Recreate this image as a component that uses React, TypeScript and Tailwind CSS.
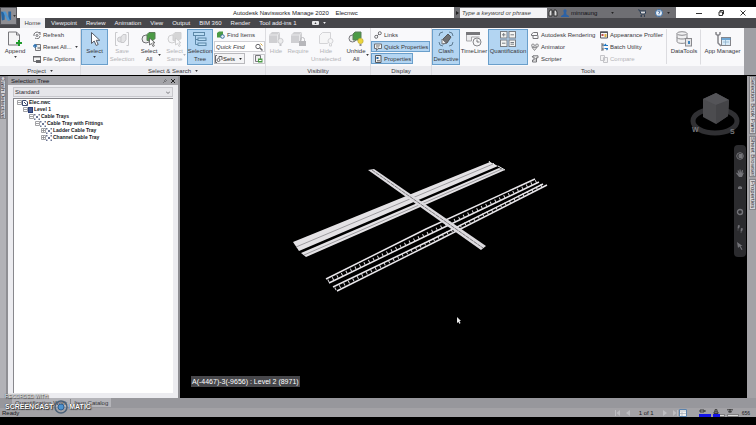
import clsx from 'clsx';
import { ReactNode } from 'react';

interface IconProps {
  className?: string;
}

const menuTabs = ['Viewpoint', 'Review', 'Animation', 'View', 'Output', 'BIM 360', 'Render', 'Tool add-ins 1'];

const treeRows = [
  { label: 'Elec.nwc', indent: 'pl-[3px]', open: true, kind: 'file' },
  { label: 'Level 1', indent: 'pl-[9px]', open: true, kind: 'level' },
  { label: 'Cable Trays', indent: 'pl-[15px]', open: true, kind: 'set' },
  { label: 'Cable Tray with Fittings', indent: 'pl-[21px]', open: true, kind: 'set' },
  { label: 'Ladder Cable Tray', indent: 'pl-[27px]', open: false, kind: 'set' },
  { label: 'Channel Cable Tray', indent: 'pl-[27px]', open: false, kind: 'set' },
];

function AppendIcon() {
  return (
    <svg viewBox="0 0 16 16" className="size-4" fill="none">
      <path d="M1.500 1h8l3 3v10h-11z" fill="#f4f4f5" stroke="#77777b" />
      <path d="M9.500 1v3h3" stroke="#77777b" />
      <path d="M12 9v6M9 12h6" stroke="#1f9a2c" strokeWidth="2" />
    </svg>
  );
}

function CursorIcon() {
  return (
    <svg viewBox="0 0 16 16" className="size-4">
      <path d="M4.500 1.500v11l2.700-2.500 2 4.500 2-1-2-4.200h3.600z" fill="#fff" stroke="#555a66" strokeWidth="1" />
    </svg>
  );
}

function SaveSelectionIcon() {
  return (
    <svg viewBox="0 0 16 16" className="size-4" fill="none" stroke="#c9c9cc">
      <path d="M3.500 1.500h-2v13h2M12.500 1.500h2v13h-2" />
      <circle cx="6" cy="8.500" r="2.500" fill="#e2e2e4" />
      <path d="M7 6l2-2.500h3v5l-2 3H7z" fill="#e4e4e6" />
    </svg>
  );
}

function SelectAllIcon({ className }: IconProps) {
  return (
    <svg viewBox="0 0 16 16" className={clsx('size-4', className)}>
      <circle cx="5" cy="8" r="4" fill="#eee" stroke="#707074" />
      <path d="M6 3.500l2-2h6v6l-2 2H6z" fill="#4b9b45" stroke="#5b7f58" />
      <path d="M8.500 7v7l2-1.500 1.500 3 1.300-.7-1.500-3H14z" fill="#fff" stroke="#555" strokeWidth=".8" />
    </svg>
  );
}

function UnhideIcon() {
  return (
    <svg viewBox="0 0 16 16" className="size-4">
      <circle cx="4.500" cy="7.500" r="3.500" fill="#eee" stroke="#77777b" />
      <path d="M5 3l2-2h6v6l-2 2H5z" fill="#4b9b45" stroke="#5b7f58" />
      <circle cx="12.500" cy="10" r="2.700" fill="#ecd63c" stroke="#b7a53a" strokeWidth=".6" />
      <path d="M11.500 13h2v2h-2z" fill="#8a8a8d" />
    </svg>
  );
}

function SelectionTreeIcon() {
  return (
    <svg viewBox="0 0 16 16" className="size-4" fill="#b9dcf4" stroke="#5d88a8">
      <rect x="1.500" y="1.500" width="11" height="3" />
      <path d="M3.500 4.500v9H6M3.500 8.500H6" fill="none" />
      <rect x="6" y="7" width="8" height="2.500" />
      <rect x="6" y="12" width="8" height="2.500" />
    </svg>
  );
}

function HideIcon({ badge }: { badge: 'bulb' | 'lock' }) {
  return (
    <svg viewBox="0 0 16 16" className="size-4">
      <path d="M1 4l3-3h8v8l-2.500 3H1z" fill="#cfcfd2" />
      <path d="M1 4h8.500v8M9.500 4L12 1" fill="none" stroke="#e8e8ea" />
      {badge === 'bulb' ? (
        <>
          <circle cx="12.500" cy="10" r="2.600" fill="#ededee" stroke="#c4c4c8" strokeWidth=".8" />
          <path d="M11.500 13h2v2h-2z" fill="#c4c4c8" />
        </>
      ) : (
        <>
          <path d="M10.500 10V8.500a2 2 0 014 0V10" fill="none" stroke="#bdbdc1" />
          <rect x="9" y="10" width="7" height="5" fill="#b7b7bb" />
        </>
      )}
    </svg>
  );
}

function HideUnselectedIcon() {
  return (
    <svg viewBox="0 0 16 16" className="size-4" fill="#f6f6f7" stroke="#d4d4d7">
      <path d="M1.500 4.500l3-3h8v7l-3 4h-8z" />
      <circle cx="12.500" cy="10" r="2.500" />
      <path d="M11.500 13v2h2v-2" />
    </svg>
  );
}

function ClashIcon() {
  return (
    <svg viewBox="0 0 16 16" className="size-4" fill="none" stroke="#5f7c93">
      <path d="M1 5l1-3 3-1M11 1l3 1 1 3M1 11l1 3 3 1M15 11l-1 3-3 1" />
      <path d="M5 8l5-5 3 3-4 6-4 1z" fill="#6f7073" stroke="#55575b" />
      <path d="M4 8l4 4-4 1z" fill="#f2f2f2" stroke="#77797d" />
    </svg>
  );
}

function TimeLinerIcon() {
  return (
    <svg viewBox="0 0 16 16" className="size-4">
      <rect x="0" y="1" width="14" height="3" fill="#77777b" />
      <path d="M.5 4v6h5V6h8" fill="#ececee" stroke="#a7a7aa" />
      <circle cx="11" cy="11" r="4" fill="#f7f7f8" stroke="#86868a" />
      <path d="M11 8.500V11h2.500" fill="none" stroke="#77777b" />
    </svg>
  );
}

function QuantificationIcon() {
  return (
    <svg viewBox="0 0 16 16" className="size-4" fill="#f4f4f2" stroke="#787d83">
      <rect x=".5" y=".5" width="6.500" height="6.500" />
      <rect x="9" y=".5" width="6.500" height="6.500" />
      <rect x=".5" y="9" width="6.500" height="6.500" />
      <rect x="9" y="9" width="6.500" height="6.500" />
      <path d="M2 3.800h3.500M3.700 2v3.500M10.500 3.800H14M2 12.200h3.500M10.500 11.500H14M10.500 13.200H14" />
    </svg>
  );
}

function DataToolsIcon() {
  return (
    <svg viewBox="0 0 16 16" className="size-4" fill="#f1f1f2" stroke="#8a8a8e">
      <path d="M1 2.500v8c0 2.500 10 2.500 10 0v-8" />
      <ellipse cx="6" cy="2.500" rx="5" ry="1.800" />
      <path d="M1 6.500c0 2 10 2 10 0" fill="none" />
      <rect x="9.500" y="7.500" width="6" height="7.500" fill="#e4e4e6" />
      <path d="M12 10h2v3h-2z" fill="#3f86c0" stroke="none" />
    </svg>
  );
}

function AppManagerIcon() {
  return (
    <svg viewBox="0 0 16 16" className="size-4" fill="none" stroke="#85858a">
      <path d="M1 1v2l2 1.500L5 3V1M3 4.500V12l3 3" strokeWidth="1.500" />
      <rect x="6.500" y="6.500" width="9" height="8" fill="#d9ebf8" />
      <path d="M6.500 8h9" stroke="#4c91c9" strokeWidth="1.500" />
      <path d="M8 11h6M10.500 9v5" stroke="#8fb2cd" strokeWidth=".8" />
    </svg>
  );
}

type SmallKind =
  | 'refresh' | 'reset' | 'file' | 'find' | 'links' | 'quick' | 'props' | 'render'
  | 'animator' | 'scripter' | 'appearance' | 'batch' | 'compare' | 'sets' | 'search' | 'export';

const smallPaths: Record<SmallKind, ReactNode> = {
  refresh: (
    <g fill="none" stroke="#707074">
      <path d="M1 5a3 3 0 015-3l1-1v3M7 5a3 3 0 01-5 2" />
      <circle cx="4" cy="4.500" r="1" />
    </g>
  ),
  reset: (
    <g fill="none">
      <path d="M2.500 1.500h5v6h-5z" fill="#eee" stroke="#77777b" />
      <path d="M0 3.500l2-2 2 2M2 2v3" stroke="#2e74b5" strokeWidth="1.200" />
      <path d="M4.500 5h3" stroke="#555" />
    </g>
  ),
  file: (
    <g>
      <path d="M.5 1.500h7v5h-7z" fill="#f3f3f3" stroke="#77777b" />
      <path d="M0 1h8v1.500H0zM3 5h5v3H3z" fill="#66666a" />
    </g>
  ),
  find: (
    <g>
      <path d="M0 2l2-1.500h4V5L4 6.500H0z" fill="#4b9b45" />
      <circle cx="5.500" cy="5.500" r="1.800" fill="#e7f0f8" stroke="#3c6f9e" />
    </g>
  ),
  links: (
    <g fill="none" stroke="#707074">
      <circle cx="5.800" cy="2.200" r="1.500" />
      <circle cx="2.200" cy="5.800" r="1.500" />
      <path d="M3 5l2-2" />
    </g>
  ),
  quick: (
    <g>
      <path d="M.5 1h7v4.500H4l-1.500 2v-2h-2z" fill="#f4f4f2" stroke="#6c6f74" />
      <path d="M2 2.800h4M2 4h3" stroke="#6c6f74" strokeWidth=".7" />
    </g>
  ),
  props: (
    <g>
      <path d="M1.500.5h5.500v7H1.500z" fill="#f4f4f2" stroke="#55585e" />
      <path d="M2.500 2h2v2h-2z" fill="#2465a3" />
      <path d="M3 5.800h3" stroke="#555" />
    </g>
  ),
  render: (
    <g fill="none" stroke="#77777b">
      <path d="M.5 3l2-1.500h4v3H.5zM2 4.500v3h5v-3" />
    </g>
  ),
  animator: (
    <g fill="#ddd" stroke="#808084" strokeWidth=".8">
      <circle cx="2" cy="2.500" r="1.500" />
      <circle cx="6" cy="2.500" r="1.500" />
      <path d="M1 4.500h5l-2.500 3z" />
    </g>
  ),
  scripter: (
    <g fill="#eee" stroke="#77777b">
      <path d="M2 .8h5v2H5.500V7h-4V5H3V2H1z" />
      <path d="M3.500 3.500h2M3.500 5h2" strokeWidth=".6" />
    </g>
  ),
  appearance: (
    <g>
      <path d="M.5 1h7v6h-7z" fill="#f6f6f6" stroke="#55555a" />
      <path d="M0 .5h8V2H0z" fill="#55555a" />
      <path d="M1.500 3h2v2h-2z" fill="#c0504d" />
      <path d="M4.500 3h2v3h-2z" fill="#e0b040" />
    </g>
  ),
  batch: (
    <g fill="none" strokeWidth="1.200">
      <path d="M1 1h2v2H1M1 5h2v2H1" stroke="#66666a" />
      <path d="M8 2.500H4.500L6 1M4.500 5.500H8L6.500 7" stroke="#1f77c4" />
    </g>
  ),
  compare: (
    <g fill="#f3f3f4" stroke="#c4c4c8">
      <path d="M.5.5h4v5h-4zM3.500 2.500h4v5h-4z" />
    </g>
  ),
  sets: (
    <g fill="none" stroke="#66666a">
      <path d="M2 .5H.5v7H2" />
      <circle cx="3.500" cy="5" r="1.500" />
      <path d="M4 3V1.500h3V5" />
    </g>
  ),
  search: (
    <g fill="none" stroke="#66666a">
      <circle cx="3" cy="3.500" r="2.200" />
      <path d="M5 5l2.500 2.500" strokeWidth="1.500" />
      <path d="M5.500.5l2 2" stroke="#d8a83c" />
    </g>
  ),
  export: (
    <g>
      <path d="M.5.5h5v6h-5z" fill="#eee" stroke="#77777b" />
      <path d="M3 3.500h4.500v4H3z" fill="#4b9b45" />
      <path d="M4 5.500h2.500" stroke="#fff" />
    </g>
  ),
};

function SmallIcon({ kind }: { kind: SmallKind }) {
  return (
    <svg viewBox="0 0 8 8" className="size-2 shrink-0">
      {smallPaths[kind]}
    </svg>
  );
}

function Caret({ className }: IconProps) {
  return (
    <svg viewBox="0 0 4 3" className={clsx('h-[2px] w-[3px] shrink-0', className)}>
      <path d="M0 0h4L2 3z" fill="currentColor" />
    </svg>
  );
}

interface BigButtonProps {
  icon: ReactNode;
  lines: string[];
  className?: string;
  active?: boolean;
  disabled?: boolean;
  caret?: 'below' | 'side';
}

function BigButton({ icon, lines, className, active, disabled, caret }: BigButtonProps) {
  return (
    <button
      type="button"
      disabled={disabled}
      className={clsx(
        'relative flex h-[36px] shrink-0 flex-col items-center border pt-px leading-[8px]',
        active ? 'border-[#6a9fcb] bg-[#b3d5f2]' : 'border-transparent',
        disabled ? 'text-[#b4b4b8]' : 'text-[#38383c]',
        className
      )}
    >
      {icon}
      {lines.map((line) => (
        <span key={line} className="whitespace-nowrap">
          {line}
        </span>
      ))}
      {caret === 'below' && <Caret className="mt-px" />}
      {caret === 'side' && <Caret className="absolute right-0 bottom-[8px]" />}
    </button>
  );
}

interface SmallButtonProps {
  kind: SmallKind;
  label: string;
  active?: boolean;
  disabled?: boolean;
  caret?: boolean;
}

function SmallButton({ kind, label, active, disabled, caret }: SmallButtonProps) {
  return (
    <button
      type="button"
      disabled={disabled}
      className={clsx(
        'flex h-[11px] items-center gap-[2px] border pr-px pl-[2px] whitespace-nowrap',
        active ? 'border-[#6a9fcb] bg-[#b3d5f2]' : 'border-transparent',
        disabled ? 'text-[#b4b4b8]' : 'text-[#38383c]'
      )}
    >
      <SmallIcon kind={kind} />
      {label}
      {caret && <Caret className="ml-px" />}
    </button>
  );
}

interface GroupProps {
  title: string;
  className?: string;
  caret?: boolean;
  children: ReactNode;
}

function Group({ title, className, caret, children }: GroupProps) {
  return (
    <section className={clsx('flex flex-col border-r border-[#dcdce0]', className)}>
      <div className="flex h-[38px] items-start pt-px">{children}</div>
      <h2 className="flex h-[9px] items-center justify-center gap-1 bg-[#ebebef] text-[#38383c]">
        {title}
        {caret && <Caret />}
      </h2>
    </section>
  );
}

function TitleBar() {
  return (
    <header className="flex h-[11px] shrink-0 items-center bg-white text-[#202024]">
      <h1 className="flex-1 pl-[233px] whitespace-pre">
        Autodesk Navisworks Manage 2020{'    '}Elecnwc
      </h1>
      <div className="flex h-full w-[222px] items-center bg-[#6f6f73]">
        <span className="flex w-[6px] justify-center text-[#222]">
          <svg viewBox="0 0 3 4" className="h-1 w-[3px]">
            <path d="M0 0l3 2-3 2z" fill="currentColor" />
          </svg>
        </span>
        <input
          aria-label="Search"
          placeholder="Type a keyword or phrase"
          className="h-[10px] w-[87px] bg-[#f4f4f6] px-[2px] italic outline-none placeholder:text-[#3c3c40]"
        />
        <button type="button" aria-label="Find" className="ml-px">
          <svg viewBox="0 0 10 8" className="h-2 w-[10px]" fill="#ddd" stroke="#333">
            <path d="M1 3l1-2h2v6H1zM9 3L8 1H6v6h3zM4 3h2" />
          </svg>
        </button>
        <button type="button" className="ml-[3px] flex items-center gap-[2px] text-[#111114]">
          <svg viewBox="0 0 8 8" className="size-2" fill="#2d62a5">
            <circle cx="4" cy="2" r="1.700" />
            <path d="M3 3h2l.5 2.500L8 7v1H0V7l2.500-1.500z" />
          </svg>
          minnaung
        </button>
        <Caret className="ml-[14px] text-[#222]" />
        <button type="button" aria-label="App store" className="ml-[24px]">
          <svg viewBox="0 0 8 8" className="size-2" fill="none" stroke="#24364c">
            <path d="M0 1h1.500L3 5h4l1-3H2" fill="#d8d8da" />
            <path d="M2.500 7h1.500M6 7h1" strokeWidth="1.500" />
          </svg>
        </button>
        <button type="button" aria-label="Help" className="ml-[9px] flex items-center gap-1">
          <svg viewBox="0 0 8 8" className="size-2" fill="none">
            <circle cx="4" cy="4" r="3.500" fill="#eaf1f8" stroke="#3a6ea5" />
            <path d="M3 3c0-1.500 2.300-1.300 2 0L4 4.300V5M4 5.700v.8" stroke="#24508a" strokeWidth=".9" />
          </svg>
          <Caret />
        </button>
      </div>
      <div className="flex w-[80px] items-center justify-between pr-[10px] pl-[20px]">
        <button type="button" aria-label="Minimize">
          <svg viewBox="0 0 6 6" className="size-[6px]" stroke="#333">
            <path d="M0 3.500h6" />
          </svg>
        </button>
        <button type="button" aria-label="Restore">
          <svg viewBox="0 0 6 6" className="size-[6px]" fill="none" stroke="#333">
            <path d="M1 2h3.500v3.500H1zM2 2V.5h3.500V4h-1" />
          </svg>
        </button>
        <button type="button" aria-label="Close">
          <svg viewBox="0 0 6 6" className="size-[6px]" stroke="#333">
            <path d="M.5.5l5 5M5.500.5l-5 5" />
          </svg>
        </button>
      </div>
    </header>
  );
}

function MenuBar() {
  return (
    <nav className="flex h-[10px] shrink-0 items-center bg-[#47474b] pl-5 text-[#f0f0f3]">
      <button type="button" className="h-full w-[25px] bg-[#f1f1f4] text-[#3c3c40]">
        Home
      </button>
      <div className="flex items-center gap-[9px] pl-[6px]">
        {menuTabs.map((tab) => (
          <button key={tab} type="button" className="whitespace-nowrap">
            {tab}
          </button>
        ))}
      </div>
      <button type="button" aria-label="Ribbon display" className="ml-[15px] flex items-center gap-1">
        <svg viewBox="0 0 7 4" className="h-1 w-[7px]">
          <rect width="7" height="4" rx="1" fill="#e8e8ea" />
          <path d="M2.500 3h2L3.500 1z" fill="#47474b" />
        </svg>
        <Caret />
      </button>
    </nav>
  );
}

function Ribbon() {
  return (
    <div className="flex h-[47px] shrink-0 bg-[#9f9fa4] pr-[12px]">
      <div className="flex flex-1 bg-[#f9f9fb]">
        <Group title="Project" caret className="w-[81px]">
          <BigButton icon={<AppendIcon />} lines={['Append']} caret="below" className="w-[30px]" />
          <div className="flex flex-col gap-px">
            <SmallButton kind="refresh" label="Refresh" />
            <SmallButton kind="reset" label="Reset All..." caret />
            <SmallButton kind="file" label="File Options" />
          </div>
        </Group>
        <Group title="Select & Search" caret className="w-[185px]">
          <BigButton icon={<CursorIcon />} lines={['Select']} caret="below" active className="w-[27px]" />
          <BigButton icon={<SaveSelectionIcon />} lines={['Save', 'Selection']} disabled className="w-[28px]" />
          <BigButton icon={<SelectAllIcon />} lines={['Select', 'All']} caret="side" className="w-[26px]" />
          <BigButton
            icon={<SelectAllIcon className="opacity-30 grayscale" />}
            lines={['Select', 'Same']}
            caret="side"
            disabled
            className="w-[25px]"
          />
          <BigButton icon={<SelectionTreeIcon />} lines={['Selection', 'Tree']} active className="w-[26px]" />
          <div className="flex flex-1 flex-col gap-px pl-px">
            <SmallButton kind="find" label="Find Items" />
            <div className="flex h-[11px] items-center border border-[#d0d0d4] bg-white pr-px">
              <input
                aria-label="Quick Find"
                placeholder="Quick Find"
                className="w-0 flex-1 pl-px italic outline-none placeholder:text-[#38383c]"
              />
              <SmallIcon kind="search" />
            </div>
            <div className="flex items-center justify-between">
              <div className="relative flex h-[11px] w-[31px] items-center border border-[#b9b9bd] bg-[#f4f4f6]">
                <SmallIcon kind="sets" />
                <select aria-label="Sets" className="flex-1 appearance-none text-[#222] outline-none">
                  <option>Sets</option>
                </select>
                <Caret className="absolute right-[2px] text-[#222]" />
              </div>
              <button type="button" aria-label="Manage sets" className="border border-[#c8c8cc] px-px">
                <SmallIcon kind="export" />
              </button>
            </div>
          </div>
        </Group>
        <Group title="Visibility" className="w-[105px]">
          <BigButton icon={<HideIcon badge="bulb" />} lines={['Hide']} disabled className="w-[20px]" />
          <BigButton icon={<HideIcon badge="lock" />} lines={['Require']} disabled className="w-[24px]" />
          <BigButton icon={<HideUnselectedIcon />} lines={['Hide', 'Unselected']} disabled className="w-[32px]" />
          <BigButton icon={<UnhideIcon />} lines={['Unhide', 'All']} caret="side" className="w-[28px]" />
        </Group>
        <Group title="Display" className="w-[61px]">
          <div className="flex flex-col items-start gap-px">
            <SmallButton kind="links" label="Links" />
            <SmallButton kind="quick" label="Quick Properties" active />
            <SmallButton kind="props" label="Properties" active />
          </div>
        </Group>
        <Group title="Tools" className="flex-1 border-r-0">
          <BigButton icon={<ClashIcon />} lines={['Clash', 'Detective']} active className="w-[28px]" />
          <BigButton icon={<TimeLinerIcon />} lines={['TimeLiner']} className="w-[28px]" />
          <BigButton icon={<QuantificationIcon />} lines={['Quantification']} active className="w-[40px]" />
          <div className="flex w-[69px] flex-col items-start gap-px">
            <SmallButton kind="render" label="Autodesk Rendering" />
            <SmallButton kind="animator" label="Animator" />
            <SmallButton kind="scripter" label="Scripter" />
          </div>
          <div className="flex w-[70px] flex-col items-start gap-px border-r border-[#dcdce0]">
            <SmallButton kind="appearance" label="Appearance Profiler" />
            <SmallButton kind="batch" label="Batch Utility" />
            <SmallButton kind="compare" label="Compare" disabled />
          </div>
          <BigButton icon={<DataToolsIcon />} lines={['DataTools']} className="w-[34px] border-r-[#dcdce0]" />
          <BigButton icon={<AppManagerIcon />} lines={['App Manager']} className="flex-1" />
        </Group>
      </div>
    </div>
  );
}

function NodeIcon({ kind }: { kind: string }) {
  if (kind === 'level') {
    return (
      <svg viewBox="0 0 5 6" className="h-[6px] w-[5px]">
        <path d="M0 0h5v6H0z" fill="#2a3f78" />
        <path d="M1 2h3M1 4h3" stroke="#8ea3d4" strokeWidth=".6" />
      </svg>
    );
  }
  if (kind === 'file') {
    return (
      <svg viewBox="0 0 6 6" className="size-[6px]" fill="none" stroke="#3c4a6e">
        <path d="M.5.5h3.500L5.500 2v3.500h-5zM2 2l2.500 2.500" />
      </svg>
    );
  }
  return (
    <svg viewBox="0 0 6 6" className="size-[6px]" fill="#6d7796">
      <path d="M0 0h1.500v1.500H0zM4.500 0H6v1.500H4.500zM2 2h2v2H2zM0 4.500h1.500V6H0zM4.500 4.500H6V6H4.500z" />
    </svg>
  );
}

function SelectionTree() {
  return (
    <aside className="flex w-[172px] shrink-0 flex-col border-r-2 border-[#8f8f94] bg-[#ececf0]">
      <div className="flex h-[9px] items-center bg-[#a4a4a9] px-[3px] text-[#18181c]">
        <h2 className="flex-1">Selection Tree</h2>
        <button type="button" aria-label="Pin" className="mr-[4px]">
          <svg viewBox="0 0 4 4" className="size-1" fill="none" stroke="#77777b">
            <path d="M0 4l2-2M1 1l2 2M2 0l2 2" />
          </svg>
        </button>
        <button type="button" aria-label="Close panel">
          <svg viewBox="0 0 4 4" className="size-1" stroke="#222">
            <path d="M0 0l4 4M4 0L0 4" />
          </svg>
        </button>
      </div>
      <div className="relative mx-[5px] mt-[2px] flex h-[10px] items-center border border-[#c8c8cd] bg-[#e6e6ea]">
        <select aria-label="Tree mode" className="w-full appearance-none px-px text-[#2a2a2e] outline-none">
          <option>Standard</option>
        </select>
        <svg viewBox="0 0 4 3" className="absolute right-[2px] h-[3px] w-1" fill="none" stroke="#55555a" strokeWidth=".8">
          <path d="M0 .5l2 2 2-2" />
        </svg>
      </div>
      <ul className="mx-[5px] mt-px mb-[5px] flex-1 overflow-hidden border-t border-l border-[#88888d] bg-white text-[5px] leading-[7px] font-bold text-[#18181c]">
        {treeRows.map((row) => (
          <li key={row.label} className={clsx('flex h-[7px] items-center', row.indent)}>
            <svg viewBox="0 0 5 5" className="size-[5px]" fill="none" stroke="#8a8a8e" strokeWidth=".8">
              <path d={row.open ? 'M.5.5h4v4h-4zM1 2.500h3' : 'M.5.5h4v4h-4zM1 2.500h3M2.500 1v3'} />
            </svg>
            <NodeIcon kind={row.kind} />
            <span className="pl-px">{row.label}</span>
          </li>
        ))}
      </ul>
    </aside>
  );
}

function CableTrays() {
  return (
    <svg viewBox="180 76 567 322" className="h-full w-full">
      <g fill="#e4e2e5">
        <path d="M293 242l197-80 8 4-199 85z" />
        <path d="M301 253l198-85 6 2-199 87z" />
      </g>
      <path d="M296 247l197-83M304 255l198-86" stroke="#8c8a8e" strokeWidth=".8" />
      <path d="M489 161l2 3M493 163l2 3M498 166l7 4" stroke="#eee" />

      <g fill="none" stroke="#d8d6da" strokeDasharray="1 4" strokeWidth="3">
        <path d="M328 281l209-100M335 289l210-105" />
      </g>
      <g fill="none" stroke="#e8e6ea" strokeWidth="1.500">
        <path d="M326 279l100-50 109-50M329 283l99-48 111-53M333 287l98-47 112-56M337 291l96-48 114-58" />
      </g>

      <path d="M368 170l6-1 112 77-5 4z" fill="#dddbdf" />
      <path d="M372 170l111 78" stroke="#706e72" strokeWidth=".9" strokeDasharray="4 .6" />
      <path d="M457 317v6l1.500-1 1 2 1-1-1-2h1.500z" fill="#e8e8e8" />
    </svg>
  );
}

function ViewCube() {
  return (
    <svg viewBox="0 0 50 46" className="absolute top-[16px] right-[7px] h-[46px] w-[50px]">
      <ellipse cx="25" cy="29" rx="22" ry="12" fill="none" stroke="#303033" strokeWidth="5" />
      <path d="M13 7l13-6 13 7-1 16-12 8-13-7z" fill="#4c4c4f" />
      <path d="M13 7l13 6 13-5-13-7z" fill="#545458" />
      <path d="M26 13v19l12-8 1-16z" fill="#444447" />
      <g fill="#77777b" fontSize="7" fontWeight="bold">
        <text x="2" y="40">W</text>
        <text x="40" y="42">S</text>
      </g>
    </svg>
  );
}

function NavigationBar() {
  return (
    <div className="absolute top-[69px] right-px flex h-[112px] w-[12px] flex-col items-center justify-between rounded-sm bg-[#2b2b2e] py-[7px] text-[#747479]">
      <button type="button" aria-label="Steering wheel">
        <svg viewBox="0 0 8 8" className="size-2" fill="none" stroke="currentColor">
          <circle cx="4" cy="4" r="3.300" />
          <path d="M3 2.500h3v3H3z" fill="currentColor" />
        </svg>
      </button>
      <button type="button" aria-label="Pan">
        <svg viewBox="0 0 8 8" className="size-2" fill="currentColor">
          <path d="M0 4l1-.5L2.500 5 1.500 1.500l1-.3L3.500 4V.5h1L5 4l1-3 1 .3L6.500 4.500 8 3.500 6 8H3z" />
        </svg>
      </button>
      <button type="button" aria-label="Zoom" className="mb-[10px]">
        <svg viewBox="0 0 4 3" className="h-[3px] w-1" fill="currentColor">
          <path d="M0 3V1l2-1 2 1v2z" />
        </svg>
      </button>
      <button type="button" aria-label="Orbit">
        <svg viewBox="0 0 8 8" className="size-2" fill="none" stroke="currentColor" strokeWidth="1.400">
          <circle cx="4" cy="4" r="2.500" />
        </svg>
      </button>
      <button type="button" aria-label="Walk">
        <svg viewBox="0 0 8 8" className="size-2" fill="currentColor">
          <path d="M2 0l2 .5-1 3H1.500zM1.500 4.500h1L2 6zM5 3l2 .5-1 3H4.500zM4.500 7h1.200L5 8z" />
        </svg>
      </button>
      <button type="button" aria-label="Select">
        <svg viewBox="0 0 8 8" className="size-2" fill="currentColor">
          <path d="M1 0l5.500 4H4.500L6.500 7.500l-1 .5-2-3.500L2 6z" />
        </svg>
      </button>
    </div>
  );
}

function Viewport() {
  return (
    <main className="relative min-w-0 flex-1 bg-black">
      <CableTrays />
      <ViewCube />
      <NavigationBar />
      <p className="absolute bottom-[11px] left-[11px] bg-[#47474b] px-px text-[7px] leading-[11px] whitespace-nowrap text-white">
        A(-4467)-3(-9656) : Level 2 (8971)
      </p>
    </main>
  );
}

function SideTab({ label, className }: { label: string; className?: string }) {
  return (
    <button
      type="button"
      className={clsx(
        'flex items-center justify-center overflow-hidden border border-[#85858a] bg-[#d2d2d6] whitespace-nowrap text-[#333337] [writing-mode:vertical-rl]',
        className
      )}
    >
      {label}
    </button>
  );
}

function DockTabs() {
  return (
    <div className="flex h-[10px] shrink-0 items-start bg-[#97979c] pl-3 text-[#35353a]">
      <div className="flex h-[9px] items-center bg-[#b4b4b9]">
        <button type="button" className="border-r border-[#85858a] px-[3px] whitespace-nowrap">
          Quantification Work
        </button>
        <button type="button" className="px-[3px] whitespace-nowrap">
          Item Catalog
        </button>
      </div>
    </div>
  );
}

function StatusBar() {
  return (
    <footer className="flex h-[9px] shrink-0 items-center bg-[#a3a2a6] pr-[6px] pl-[2px] text-[#18181c]">
      <span className="flex-1">Ready</span>
      <div className="flex items-center text-[#bdbdc1]">
        <svg viewBox="0 0 16 6" className="h-[6px] w-4" fill="currentColor">
          <path d="M0 0h1v6H0zM5 0v6L1.500 3zM15 0v6l-4-3z" />
        </svg>
        <span className="px-2 text-[#18181c]">1 of 1</span>
        <svg viewBox="0 0 16 6" className="h-[6px] w-4" fill="currentColor">
          <path d="M1 0v6l4-3zM11 0v6l3.500-3zM15 0h1v6h-1z" />
        </svg>
      </div>
      <button type="button" aria-label="Sheet browser" className="ml-px">
        <svg viewBox="0 0 8 8" className="size-2">
          <path d="M.5.5h7v7h-7z" fill="#f1f1f1" stroke="#5a82ad" />
          <path d="M1 2h6M3 3v4M1 4.500h6" stroke="#a3a9b2" strokeWidth=".7" />
        </svg>
      </button>
      <div className="ml-[12px] flex gap-[2px]">
        <svg viewBox="0 0 12 8" className="h-2 w-3">
          <path d="M1 1h4v2H1zM5 2h2" fill="none" stroke="#222" strokeWidth=".8" />
          <path d="M0 5h12v3H0z" fill="#1414e6" />
        </svg>
        <svg viewBox="0 0 12 8" className="h-2 w-3">
          <path d="M1 3h4v1.500H1zM2 3V.7h2V3" fill="none" stroke="#222" strokeWidth=".8" />
          <path d="M.5 5.500h11v2H.5z" fill="#ddd" stroke="#555" strokeWidth=".6" />
          <path d="M0 5h7v3H0z" fill="#1414e6" />
        </svg>
        <svg viewBox="0 0 12 8" className="h-2 w-3">
          <path d="M0 .8h6M1 2.800h4M3 0v4" fill="none" stroke="#222" strokeWidth=".8" />
          <path d="M.5 5.500h11v2H.5z" fill="#ddd" stroke="#555" strokeWidth=".6" />
        </svg>
      </div>
      <span className="ml-[3px] text-[5px]">656</span>
    </footer>
  );
}

function Watermark() {
  return (
    <div className="absolute bottom-[10px] left-[5px] text-white [text-shadow:0_0_1px_#000,1px_1px_1px_#333]">
      <p className="text-[5px] leading-[6px]">RECORDED WITH</p>
      <p className="flex items-center gap-px text-[7px] leading-[16px] font-bold">
        SCREENCAST
        <svg viewBox="0 0 14 14" className="size-[14px]" fill="none">
          <circle cx="7" cy="7" r="6" stroke="#4a6078" strokeWidth="1.500" />
          <circle cx="7" cy="7" r="3" fill="#4e93cf" stroke="#2f5f90" />
        </svg>
        MATIC
      </p>
    </div>
  );
}

function App() {
  return (
    <div className="relative flex h-screen flex-col overflow-hidden bg-black pt-[7px] pb-2 font-['Liberation_Sans',sans-serif] text-[6px] leading-[8px]">
      <div className="relative shrink-0">
        <TitleBar />
        <MenuBar />
        <button
          type="button"
          aria-label="Application menu"
          className="absolute top-0 left-0 flex h-[18px] w-[17px] items-center justify-center gap-px border border-[#55555a] bg-[#8e8e93]"
        >
          <svg viewBox="0 0 12 12" className="size-3">
            <path d="M0 1l4 1v8l-3 1zM8 1h3v9l-3 1z" fill="#2465a3" />
            <path d="M2 1h3l5 10H7z" fill="#4d95d0" />
          </svg>
          <Caret className="text-[#333]" />
        </button>
      </div>
      <Ribbon />
      <div className="mt-px flex min-h-0 flex-1">
        <div className="flex w-[8px] shrink-0 flex-col border-r-2 border-[#8f8f94] bg-[#b2b2b7]">
          <SideTab label="Clash Detective" className="h-[43px] w-[6px]" />
        </div>
        <SelectionTree />
        <Viewport />
        <div className="flex w-[9px] shrink-0 flex-col items-end gap-[2px] bg-[#a3a2a6]">
          <SideTab label="Selection Book Pane" className="h-[58px] w-[7px]" />
          <SideTab label="Sheet Browser" className="h-[41px] w-[7px]" />
          <SideTab label="Properties" className="h-[31px] w-[7px]" />
        </div>
      </div>
      <DockTabs />
      <StatusBar />
      <Watermark />
    </div>
  );
}

export default App;
